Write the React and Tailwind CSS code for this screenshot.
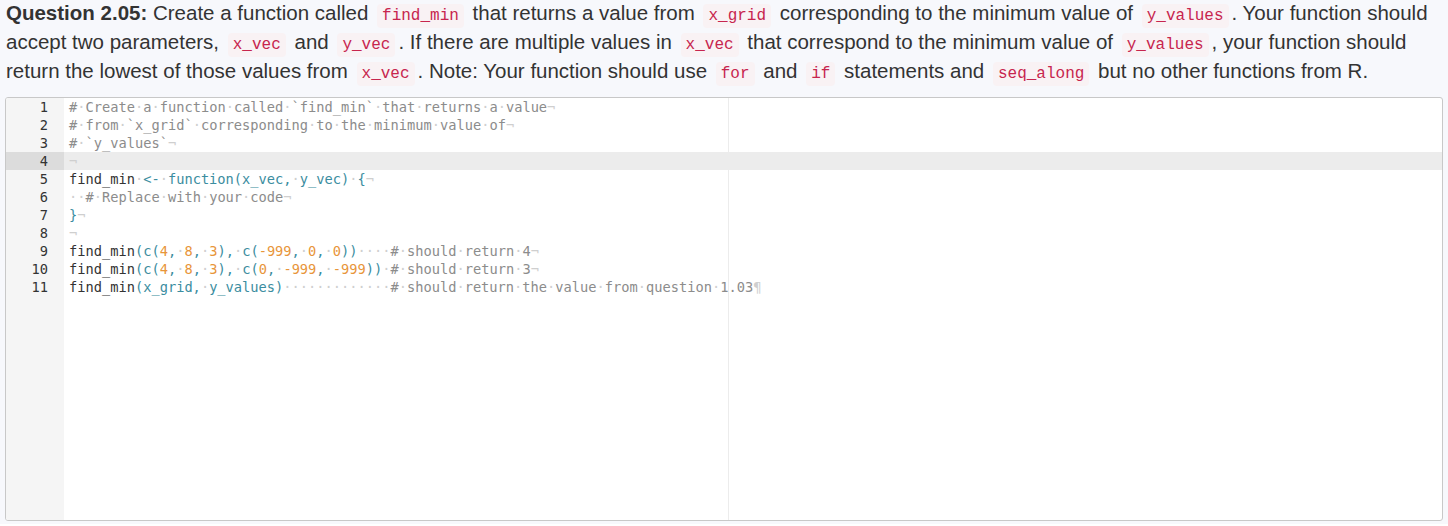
import React from 'react';

const Code = ({ children }) => (
  <code className="font-['Liberation_Mono',monospace] text-[16px] leading-none text-[#c7254e] bg-[#f9f2f4] rounded px-[5px] py-[3px] mx-[3px]">{children}</code>
);

const C = {
  t: 'text-[#333333]',
  k: 'text-[#3b8da0]',
  n: 'text-[#e8953a]',
  c: 'text-[#8c8c8c]',
};

const lines = [
  [['# Create a function called `find_min` that returns a value', 'c']],
  [['# from `x_grid` corresponding to the minimum value of', 'c']],
  [['# `y_values`', 'c']],
  [],
  [['find_min', 't'], [' ', 'w'], ['<-', 'k'], [' ', 'w'], ['function(x_vec,', 'k'], [' ', 'w'], ['y_vec)', 'k'], [' ', 'w'], ['{', 'k']],
  [['  ', 'w'], ['# Replace with your code', 'c']],
  [['}', 'k']],
  [],
  [['find_min', 't'], ['(c(', 'k'], ['4', 'n'], [',', 'k'], [' ', 'w'], ['8', 'n'], [',', 'k'], [' ', 'w'], ['3', 'n'], ['),', 'k'], [' ', 'w'], ['c(', 'k'], ['-999', 'n'], [',', 'k'], [' ', 'w'], ['0', 'n'], [',', 'k'], [' ', 'w'], ['0', 'n'], ['))', 'k'], ['    ', 'w'], ['# should return 4', 'c']],
  [['find_min', 't'], ['(c(', 'k'], ['4', 'n'], [',', 'k'], [' ', 'w'], ['8', 'n'], [',', 'k'], [' ', 'w'], ['3', 'n'], ['),', 'k'], [' ', 'w'], ['c(', 'k'], ['0', 'n'], [',', 'k'], [' ', 'w'], ['-999', 'n'], [',', 'k'], [' ', 'w'], ['-999', 'n'], ['))', 'k'], [' ', 'w'], ['# should return 3', 'c']],
  [['find_min', 't'], ['(x_grid,', 'k'], [' ', 'w'], ['y_values)', 'k'], ['             ', 'w'], ['# should return the value from question 1.03', 'c']],
];

// render text with visible whitespace dots
const Tok = ({ text, kind }) => {
  if (kind === 'w') return <span className="text-[#cfcfcf]">{text.replace(/ /g, '·')}</span>;
  const parts = text.split(/( )/);
  return parts.map((p, i) =>
    p === ' ' ? <span key={i} className="text-[#cfcfcf]">·</span> : <span key={i} className={C[kind]}>{p}</span>
  );
};

export default function App() {
  return (
    <div className="min-h-screen bg-[#f7f8fc] px-[6px] font-['Liberation_Sans',Arial,sans-serif] text-[#333333]">
      <p className="text-[20.5px] leading-[29px] mt-[-2px]">
        <b>Question 2.05:</b> Create a function called <Code>find_min</Code> that returns a value from <Code>x_grid</Code> corresponding to the minimum value of <Code>y_values</Code>. Your function should accept two parameters, <Code>x_vec</Code> and <Code>y_vec</Code>. If there are multiple values in <Code>x_vec</Code> that correspond to the minimum value of <Code>y_values</Code>, your function should return the lowest of those values from <Code>x_vec</Code>. Note: Your function should use <Code>for</Code> and <Code>if</Code> statements and <Code>seq_along</Code> but no other functions from R.
      </p>

      <div className="mt-[12px] ml-[-1px] w-[1438px] h-[424px] border border-[#c8c8c8] rounded-[3px] bg-white flex overflow-hidden font-['DejaVu_Sans_Mono',monospace] text-[13.7px] leading-[18px]">
        <div className="w-[58px] bg-[#f5f5f5] flex flex-col text-[#333333]">
          {lines.map((_, i) => (
            <div key={i} className={`h-[18px] text-right pr-[16px] ${i === 3 ? 'bg-[#dcdcdc]' : ''}`}>{i + 1}</div>
          ))}
        </div>
        <div className="flex-1 relative">
          <div className="absolute top-0 bottom-0 left-[664px] w-px bg-[#ececec]" />
          {lines.map((toks, i) => (
            <div key={i} className={`h-[18px] pl-[5px] whitespace-pre relative ${i === 3 ? 'bg-[#ececec]' : ''}`}>
              {toks.map((t, j) => <Tok key={j} text={t[0]} kind={t[1]} />)}
              <span className="text-[#cfcfcf]">{i === lines.length - 1 ? '¶' : '¬'}</span>
            </div>
          ))}
        </div>
      </div>
    </div>
  );
}
